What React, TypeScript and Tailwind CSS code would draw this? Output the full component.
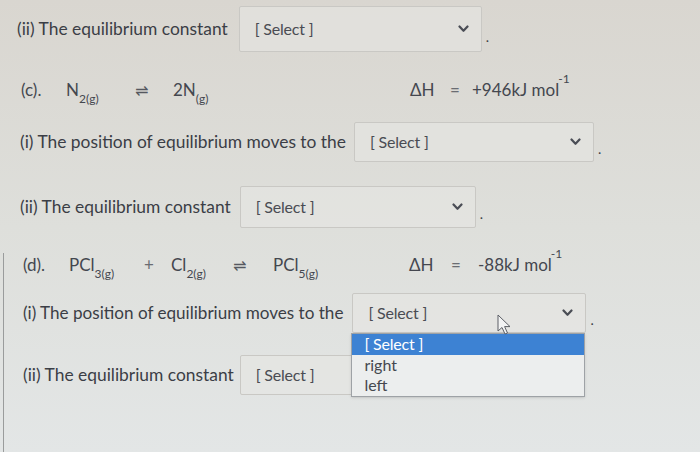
import React from "react";

const Chevron = () => (
  <svg width="11" height="8" viewBox="0 0 11 8" className="shrink-0">
    <polyline points="1.5,1.5 5.5,5.8 9.5,1.5" fill="none" stroke="#4a4d55" strokeWidth="2.2" strokeLinecap="round" strokeLinejoin="round" />
  </svg>
);

function SelectBox({ w, h, children }: { w: string; h: string; children?: React.ReactNode }) {
  return (
    <div className={`relative flex items-center justify-between border border-[#c9c8c4] bg-[#e6e6e2]/60 rounded-[2px] pl-[15px] pr-[12px] ${w} ${h}`}>
      <span className="text-[16px] text-[#4a4c53] tracking-[-0.2px]">[ Select ]</span>
      <Chevron />
      {children}
    </div>
  );
}

const Sub = ({ children }: { children: React.ReactNode }) => (
  <sub className="text-[12px] align-[-4px] leading-none">{children}</sub>
);

const Sup = ({ children }: { children: React.ReactNode }) => (
  <sup className="text-[12px] align-[7px] leading-none ml-[-1px]">{children}</sup>
);

const Arrow = () => <span className="font-['DejaVu_Sans'] text-[16px] text-[#55585f]">⇌</span>;

export default function App() {
  return (
    <div className="relative w-[700px] h-[452px] overflow-hidden bg-linear-to-b from-[#d9d6d0] via-[#dedfdb] to-[#e3e6e6] font-['Lato',sans-serif] text-[#3b3e46]">
      {/* Row 1 */}
      <div className="flex items-center h-[46px] mt-[6px] pl-[17px]">
        <span className="text-[17.4px]">(ii) The equilibrium constant</span>
        <div className="ml-[11px]"><SelectBox w="w-[243px]" h="h-[46px]" /></div>
        <span className="ml-[4px] mt-[14px] text-[14px]">.</span>
      </div>

      {/* Row 2 (c) */}
      <div className="flex items-center h-[24px] mt-[26px] pl-[21px] text-[17px] text-[#44474f]">
        <span className="w-[45px]">(c).</span>
        <span className="w-[69px]">N<Sub>2(g)</Sub></span>
        <span className="w-[38px]"><Arrow /></span>
        <span className="w-[237px]">2N<Sub>(g)</Sub></span>
        <span className="w-[40px]">ΔH</span>
        <span className="w-[22px] text-[#6a6c72]">=</span>
        <span>+946kJ mol<Sup>-1</Sup></span>
      </div>

      {/* Row 3 */}
      <div className="flex items-center h-[40px] mt-[20px] pl-[20px]">
        <span className="text-[17.4px]">(i) The position of equilibrium moves to the</span>
        <div className="ml-[8px]"><SelectBox w="w-[240px]" h="h-[40px]" /></div>
        <span className="ml-[4px] mt-[12px] text-[14px]">.</span>
      </div>

      {/* Row 4 */}
      <div className="flex items-center h-[42px] mt-[24px] pl-[20px]">
        <span className="text-[17.4px]">(ii) The equilibrium constant</span>
        <div className="ml-[9px]"><SelectBox w="w-[236px]" h="h-[42px]" /></div>
        <span className="ml-[4px] mt-[12px] text-[14px]">.</span>
      </div>

      <div className="border-l border-[#9a9c9c] ml-[3px] pb-[60px]">
        {/* Row 5 (d) */}
        <div className="flex items-center h-[24px] mt-[25px] pl-[19px] text-[17px] text-[#44474f]">
          <span className="w-[46px]">(d).</span>
          <span className="w-[75px]">PCl<Sub>3(g)</Sub></span>
          <span className="w-[27px] text-[#6a6c72]">+</span>
          <span className="w-[62px]">Cl<Sub>2(g)</Sub></span>
          <span className="w-[40px]"><Arrow /></span>
          <span className="w-[136px]">PCl<Sub>5(g)</Sub></span>
          <span className="w-[42px]">ΔH</span>
          <span className="w-[27px] text-[#6a6c72]">=</span>
          <span>-88kJ mol<Sup>-1</Sup></span>
        </div>

        {/* Row 6 */}
        <div className="relative z-10 flex items-center h-[40px] mt-[16px] pl-[19px]">
          <span className="text-[17.1px]">(i) The position of equilibrium moves to the</span>
          <div className="ml-[9px]">
            <SelectBox w="w-[234px]" h="h-[40px]">
              <div className="absolute left-[-2px] top-[39px] w-[234px] border border-[#9ea2a6] bg-[#eceeee] shadow-sm text-[16px] leading-[20px]">
                <div className="bg-[#3d82d3] text-white pl-[12px] h-[21px] tracking-[-0.2px]">[ Select ]</div>
                <div className="pl-[12px] text-[#45484f]">right</div>
                <div className="pl-[12px] text-[#45484f] pb-[1px]">left</div>
              </div>
              <svg width="16" height="22" viewBox="0 0 16 22" className="absolute left-[144px] top-[20px]">
                <path d="M1 1 L1 17 L5 13.5 L8 20 L10.5 19 L7.6 12.6 L13 12.6 Z" fill="#f2f3f3" stroke="#5c5f66" strokeWidth="1" strokeLinejoin="round" />
              </svg>
            </SelectBox>
          </div>
          <span className="ml-[4px] mt-[12px] text-[14px]">.</span>
        </div>

        {/* Row 7 */}
        <div className="flex items-center h-[40px] mt-[22px] pl-[19px]">
          <span className="text-[17.4px]">(ii) The equilibrium constant</span>
          <div className="ml-[6px]"><SelectBox w="w-[236px]" h="h-[40px]" /></div>
        </div>
      </div>
    </div>
  );
}
